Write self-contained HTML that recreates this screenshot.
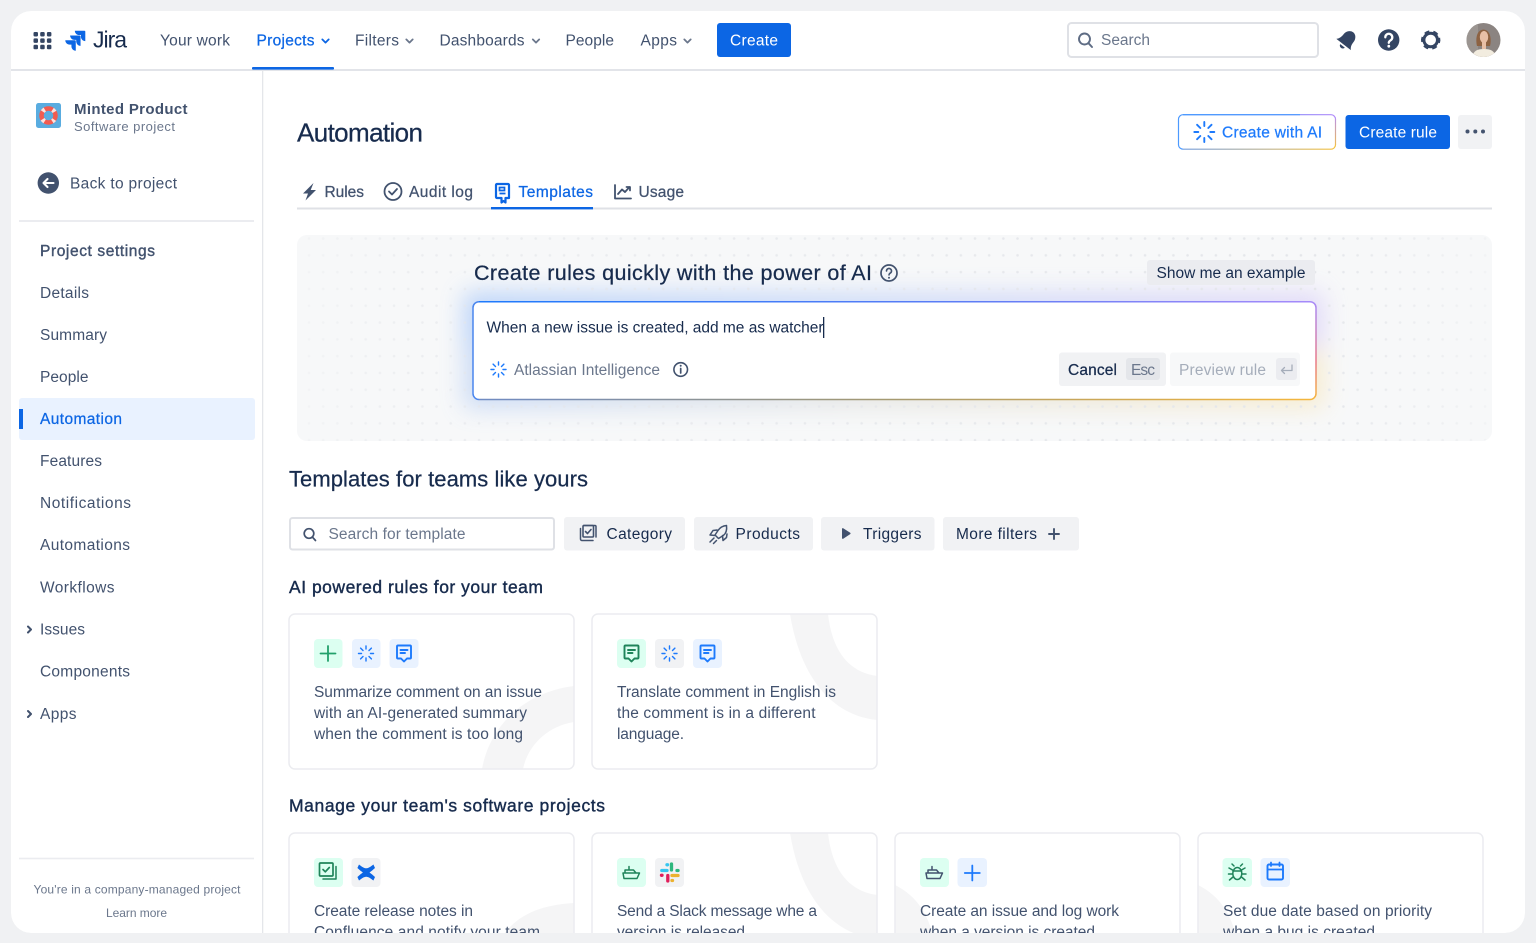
<!DOCTYPE html>
<html lang="en"><head><meta charset="utf-8"><title>Automation - Jira</title>
<style>
html,body{margin:0;padding:0;background:#f0f1f3;width:1536px;height:943px;overflow:hidden}
svg{display:block;filter:blur(.3px)}
text{font-family:"Liberation Sans",sans-serif;font-size:15.5px;fill:#42526e}
.m{stroke:currentColor;stroke-width:.25px;paint-order:stroke}
.s{stroke:currentColor;stroke-width:.4px;paint-order:stroke}
.dk{fill:#172b4d;color:#172b4d}
.sl{fill:#42526e;color:#42526e}
.bl{fill:#0c66e4;color:#0c66e4}
.gr{fill:#6b778c;color:#6b778c}
.nf{fill:none;stroke-linecap:round;stroke-linejoin:round}
</style></head><body>
<svg width="1536" height="943" viewBox="0 0 1536 943" xmlns="http://www.w3.org/2000/svg">
<defs>
<g id="spark" fill="none" stroke="currentColor" stroke-width="1.9" stroke-linecap="round">
<path d="M0-10V-6M0 6V10M-10 0H-6M6 0H10M-7.2-7.2L-4-4M7.2-7.2L4-4M-7.2 7.2L-4 4M7.2 7.2L4 4"/></g>
<g id="cmt" fill="none" stroke="currentColor" stroke-width="1.9" stroke-linejoin="round" stroke-linecap="round">
<path d="M-6-8H6a1 1 0 0 1 1 1V4a1 1 0 0 1-1 1H3L0 8-3 5H-6a1 1 0 0 1-1-1V-7a1 1 0 0 1 1-1z"/><path d="M-3.500-3.500H3.500M-3.500-.5H1"/></g>
<g id="ship" fill="none" stroke="currentColor" stroke-width="1.500" stroke-linejoin="round" stroke-linecap="round">
<path d="M-8 0H8.500L6 5.500H-7L-8 0zM-6 0V-3H2.500L5 0M-2-3V-6.500"/></g>
<g id="chev" fill="none" stroke="currentColor" stroke-width="1.8" stroke-linecap="round" stroke-linejoin="round"><path d="M-3.200-1.600L0 1.600 3.200-1.600"/></g>
<pattern id="dots" x="931" y="237" width="14.17" height="16.8" patternUnits="userSpaceOnUse"><circle cx="1.5" cy="1.5" r="1.3" fill="#e4e6ea"/></pattern>
<linearGradient id="fade" gradientUnits="userSpaceOnUse" x1="297" y1="0" x2="1492" y2="0"><stop offset="0" stop-color="#333"/><stop offset=".1" stop-color="#999"/><stop offset=".85" stop-color="#fff"/><stop offset="1" stop-color="#444"/></linearGradient>
<mask id="dm"><rect x="297" y="235" width="1195" height="206" fill="url(#fade)"/></mask>
<filter id="b" x="-30%" y="-80%" width="160%" height="260%"><feGaussianBlur stdDeviation="12"/></filter>
<linearGradient id="gt" gradientUnits="userSpaceOnUse" x1="473" y1="0" x2="1316" y2="0"><stop offset="0" stop-color="#1d7afc"/><stop offset=".6" stop-color="#5f7df5"/><stop offset="1" stop-color="#a78bfa"/></linearGradient>
<linearGradient id="gr" gradientUnits="userSpaceOnUse" x1="0" y1="301" x2="0" y2="400"><stop offset="0" stop-color="#a78bfa"/><stop offset=".6" stop-color="#e8788a"/><stop offset="1" stop-color="#f5b73d"/></linearGradient>
<linearGradient id="gb" gradientUnits="userSpaceOnUse" x1="473" y1="0" x2="1316" y2="0"><stop offset="0" stop-color="#6f8bc4"/><stop offset=".5" stop-color="#a69a70"/><stop offset="1" stop-color="#f5b73d"/></linearGradient>
<linearGradient id="gw1" gradientUnits="userSpaceOnUse" x1="462" y1="0" x2="1325" y2="0"><stop offset="0" stop-color="#6ea5fa"/><stop offset=".45" stop-color="#9ab8f8"/><stop offset="1" stop-color="#c6b2f8"/></linearGradient>
<linearGradient id="gw2" gradientUnits="userSpaceOnUse" x1="462" y1="0" x2="1325" y2="0"><stop offset="0" stop-color="#8fb4f2"/><stop offset=".45" stop-color="#cfd0cc"/><stop offset="1" stop-color="#f8dc96"/></linearGradient>
<linearGradient id="at" gradientUnits="userSpaceOnUse" x1="1178" y1="0" x2="1336" y2="0"><stop offset="0" stop-color="#1d7afc"/><stop offset="1" stop-color="#b38df9"/></linearGradient>
<linearGradient id="ar" gradientUnits="userSpaceOnUse" x1="0" y1="114" x2="0" y2="150"><stop offset="0" stop-color="#b38df9"/><stop offset="1" stop-color="#f5c13d"/></linearGradient>
<linearGradient id="ab" gradientUnits="userSpaceOnUse" x1="1178" y1="0" x2="1336" y2="0"><stop offset="0" stop-color="#6f9be0"/><stop offset=".6" stop-color="#c2b48a"/><stop offset="1" stop-color="#f5c13d"/></linearGradient>
<clipPath id="c1"><rect x="289" y="614" width="285" height="155" rx="6"/></clipPath>
<clipPath id="c2"><rect x="592" y="614" width="285" height="155" rx="6"/></clipPath>
<clipPath id="c3"><rect x="289" y="833" width="285" height="155" rx="6"/></clipPath>
<clipPath id="c4"><rect x="592" y="833" width="285" height="155" rx="6"/></clipPath>
<clipPath id="c5"><rect x="895" y="833" width="285" height="155" rx="6"/></clipPath>
<clipPath id="c6"><rect x="1198" y="833" width="285" height="155" rx="6"/></clipPath>
<clipPath id="av"><circle cx="1483.500" cy="40" r="17"/></clipPath>
</defs>

<rect width="1536" height="943" fill="#f0f1f3"/>
<rect x="11" y="11" width="1514" height="922" rx="20" fill="#fff"/>

<!-- top nav -->
<rect x="11" y="69" width="1514" height="2" fill="#e2e4e9"/>
<g fill="#344563"><rect x="33.500" y="32" width="4.500" height="4.500" rx="1.200"/><rect x="40.200" y="32" width="4.500" height="4.500" rx="1.200"/><rect x="46.900" y="32" width="4.500" height="4.500" rx="1.200"/><rect x="33.500" y="38.400" width="4.500" height="4.500" rx="1.200"/><rect x="40.200" y="38.400" width="4.500" height="4.500" rx="1.200"/><rect x="46.900" y="38.400" width="4.500" height="4.500" rx="1.200"/><rect x="33.500" y="44.800" width="4.500" height="4.500" rx="1.200"/><rect x="40.200" y="44.800" width="4.500" height="4.500" rx="1.200"/><rect x="46.900" y="44.800" width="4.500" height="4.500" rx="1.200"/></g>
<g transform="translate(63.300 28.700)" fill="#0c66e4"><path d="M11.530 2c0 2.400 1.970 4.350 4.350 4.350h1.780v1.700c0 2.400 1.940 4.340 4.340 4.350V2.840A.84.84 0 0 0 21.160 2H11.530z"/><path d="M6.770 6.800a4.360 4.360 0 0 0 4.340 4.340h1.800v1.720a4.360 4.360 0 0 0 4.340 4.340V7.630a.84.84 0 0 0-.83-.83H6.770z"/><path d="M2 11.600c0 2.400 1.950 4.340 4.350 4.340h1.780v1.720c.01 2.390 1.950 4.330 4.340 4.340v-9.570a.84.84 0 0 0-.84-.84H2z"/></g>
<text x="93" y="47.500" textLength="34" style="font-size:23px;fill:#172b4d">Jira</text>
<text x="160" y="45.300" textLength="70">Your work</text>
<text x="256.500" y="45.300" textLength="58" class="bl m">Projects</text>
<use href="#chev" x="325.500" y="41" color="#0c66e4"/>
<text x="355" y="45.300" textLength="44">Filters</text>
<use href="#chev" x="409.500" y="41" color="#6b778c"/>
<text x="439.500" y="45.300" textLength="85">Dashboards</text>
<use href="#chev" x="536" y="41" color="#6b778c"/>
<text x="565.500" y="45.300" textLength="48.500">People</text>
<text x="640.500" y="45.300" textLength="36.500">Apps</text>
<use href="#chev" x="687.500" y="41" color="#6b778c"/>
<rect x="252" y="67" width="82" height="2.600" rx="1" fill="#0c66e4"/>
<rect x="717" y="23" width="74" height="34" rx="3" fill="#0c66e4"/>
<text x="730" y="45.300" textLength="48" style="fill:#fff">Create</text>

<rect x="1068" y="23" width="250" height="34" rx="3.500" fill="#fff" stroke="#dfe1e6" stroke-width="2"/>
<g class="nf" stroke="#5e6c84" stroke-width="1.900"><circle cx="1084.500" cy="39" r="5.500"/><path d="M1088.500 43.200L1092 47"/></g>
<text x="1101" y="44.800" textLength="49" class="gr">Search</text>

<g transform="translate(1347.500 39.500) rotate(38) scale(1.150)" fill="#344563"><path d="M-8 5.500C-6 3.500-5.500 1.500-5.500-1.500A5.500 6.500 0 0 1 5.500-1.500C5.500 1.500 6 3.500 8 5.500Z"/><path d="M-2.500 7h5a2.500 2.200 0 0 1-5 0z"/></g>
<circle cx="1388.700" cy="40" r="10.700" fill="#344563"/>
<path d="M1385.300 37.300a3.500 3.500 0 1 1 5.300 3c-1.300.8-1.800 1.400-1.800 2.500" fill="none" stroke="#fff" stroke-width="2.300" stroke-linecap="round"/><circle cx="1388.800" cy="46.200" r="1.400" fill="#fff"/>
<circle cx="1430.700" cy="40" r="6.800" fill="none" stroke="#344563" stroke-width="3"/>
<circle cx="1430.700" cy="40" r="8.600" fill="none" stroke="#344563" stroke-width="2.200" stroke-dasharray="5 4" transform="rotate(-14 1430.700 40)"/>

<g clip-path="url(#av)"><rect x="1466" y="23" width="35" height="35" fill="#8b8481"/><rect x="1466" y="23" width="12" height="35" fill="#9b9591"/>
<path d="M1477 46c-1.500-6-1-16 6.500-16.500 7.500.5 8 11 6.500 16.500z" fill="#8d6242"/><ellipse cx="1484" cy="37" rx="4.200" ry="6" fill="#e8bfa6"/><path d="M1472 58c1-7 5-9 12-9s11 2 12 9z" fill="#f2ecdf"/><rect x="1482" y="41.500" width="4" height="7.500" fill="#e8bfa6"/></g>

<!-- sidebar -->
<rect x="262" y="71" width="1.300" height="862" fill="#e4e6ea"/>
<rect x="36" y="103" width="25" height="25" rx="2.500" fill="#59ace0"/>
<circle cx="48.500" cy="115.500" r="7" fill="none" stroke="#f15b50" stroke-width="4.500"/>
<circle cx="48.500" cy="115.500" r="7" fill="none" stroke="#fbe3e0" stroke-width="4.500" stroke-dasharray="3 8" stroke-dashoffset="1.500" transform="rotate(45 48.500 115.500)"/>
<text x="74" y="114" textLength="113.500" class="sl" style="font-weight:700;font-size:15px">Minted Product</text>
<text x="74" y="131" textLength="101" class="gr" style="font-size:13px">Software project</text>
<circle cx="48.300" cy="183" r="10.700" fill="#42526e"/>
<path d="M53.500 183H44M47.500 179L43.500 183l4 4" fill="none" stroke="#fff" stroke-width="2.100" stroke-linecap="round" stroke-linejoin="round"/>
<text x="70" y="188.500" textLength="107">Back to project</text>
<rect x="19" y="220" width="235" height="2" fill="#ebecf0"/>
<text x="40" y="256" textLength="115" class="sl s">Project settings</text>
<text x="40" y="298" textLength="49">Details</text>
<text x="40" y="340" textLength="67">Summary</text>
<text x="40" y="382" textLength="48.500">People</text>
<rect x="19" y="398" width="236" height="42" rx="3" fill="#e9f2ff"/>
<rect x="19" y="409" width="4" height="20" fill="#0c66e4"/>
<text x="40" y="424" textLength="82" class="bl m">Automation</text>
<text x="40" y="466" textLength="62">Features</text>
<text x="40" y="508" textLength="91">Notifications</text>
<text x="40" y="550" textLength="90">Automations</text>
<text x="40" y="592.500" textLength="74.500">Workflows</text>
<text x="40" y="634.500" textLength="45">Issues</text>
<text x="40" y="676.500" textLength="90">Components</text>
<text x="40" y="719" textLength="36.500">Apps</text>
<path d="M28 626.500l3 3-3 3M28 711l3 3-3 3" fill="none" stroke="#42526e" stroke-width="2" stroke-linecap="round" stroke-linejoin="round"/>
<rect x="19" y="857.700" width="235" height="1.600" fill="#ebecf0"/>
<text x="33.500" y="893.500" textLength="207" class="gr" style="font-size:12px">You're in a company-managed project</text>
<text x="106" y="917" textLength="61" class="gr" style="font-size:12px">Learn more</text>

<!-- header -->
<text x="297" y="141.500" textLength="126" class="dk m" style="font-size:26px">Automation</text>
<rect x="1179" y="115" width="156.500" height="34" rx="4" fill="#fff"/>
<path d="M1183 114.700H1331a4.500 4.500 0 0 1 4.500 4.500" fill="none" stroke="url(#at)" stroke-width="1.200"/>
<path d="M1183 114.700H1300" fill="none" stroke="#4c9aff" stroke-width="1.200"/>
<path d="M1335.500 119V145" fill="none" stroke="url(#ar)" stroke-width="1.200"/>
<path d="M1183 149.200H1331a4.500 4.500 0 0 0 4.500-4.500" fill="none" stroke="url(#ab)" stroke-width="1.200"/>
<path d="M1183 114.700a4.500 4.500 0 0 0-4.500 4.500V145a4.500 4.500 0 0 0 4.500 4.200" fill="none" stroke="#4c9aff" stroke-width="1.200"/>
<use href="#spark" x="1204.300" y="132" color="#1d7afc"/>
<text x="1222" y="137.300" textLength="100" style="fill:#1d7afc;color:#1d7afc" class="m">Create with AI</text>
<rect x="1345.500" y="115" width="104.500" height="34" rx="3" fill="#0c66e4"/>
<text x="1359" y="137.300" textLength="78" style="fill:#fff">Create rule</text>
<rect x="1458" y="115" width="34" height="34" rx="3" fill="#f1f2f4"/>
<g fill="#44546f"><circle cx="1467.500" cy="131.500" r="2"/><circle cx="1475.300" cy="131.500" r="2"/><circle cx="1483" cy="131.500" r="2"/></g>

<!-- tabs -->
<rect x="297" y="207.500" width="1195" height="2" fill="#dfe1e6"/>
<rect x="491" y="207" width="102" height="2.400" fill="#0c66e4"/>
<path d="M313.500 183L303 193.500h5L305.500 200.500 316 190h-5.300z" fill="#42526e"/>
<text x="324.500" y="197" textLength="39.500" class="sl m">Rules</text>
<circle cx="393" cy="191.500" r="8.500" fill="none" stroke="#42526e" stroke-width="1.800"/>
<path d="M389 191.500l3 3 5-5.500" class="nf" stroke="#42526e" stroke-width="1.800"/>
<text x="409" y="197" textLength="64" class="sl m">Audit log</text>
<path d="M497 184h11a1 1 0 0 1 1 1v13h-3.500v4.500l-2-1.500-2 1.500V198H497a1 1 0 0 1-1-1v-12a1 1 0 0 1 1-1z" fill="none" stroke="#0c66e4" stroke-width="2.200" stroke-linejoin="round"/>
<path d="M499.500 187.500h5v3h-5zM499.500 193.500h6" fill="none" stroke="#0c66e4" stroke-width="1.700"/>
<text x="518.500" y="197" textLength="74.500" class="bl m">Templates</text>
<path d="M615 185v13.500h16M618 194l4-4.500 3 2.500 4.500-5M626.500 187h3.500v3.500" class="nf" stroke="#42526e" stroke-width="1.800"/>
<text x="638.500" y="197" textLength="45.500" class="sl m">Usage</text>

<!-- AI panel -->
<rect x="297" y="235" width="1195" height="206" rx="10" fill="#f7f8f9"/>
<g filter="url(#b)" opacity=".42">
<rect x="464" y="292" width="860" height="56" fill="url(#gw1)"/>
<rect x="464" y="348" width="860" height="60" fill="url(#gw2)"/>
</g>
<rect x="297" y="235" width="1195" height="206" rx="10" fill="url(#dots)" mask="url(#dm)"/>
<text x="474" y="280" textLength="398" class="dk m" style="font-size:21.500px">Create rules quickly with the power of AI</text>
<circle cx="889" cy="273" r="8" fill="none" stroke="#42526e" stroke-width="1.700"/>
<path d="M886.500 271a2.500 2.500 0 1 1 3.800 2.100c-.9.600-1.300 1-1.300 1.800" fill="none" stroke="#42526e" stroke-width="1.600" stroke-linecap="round"/><circle cx="889" cy="277.700" r="1" fill="#42526e"/>
<rect x="1147" y="260" width="168" height="25" rx="3" fill="#ebecf0"/>
<text x="1156.500" y="278" textLength="149" class="dk">Show me an example</text>

<rect x="473" y="301.500" width="843" height="98" rx="6" fill="#fff"/>
<path d="M479 301.700H1310" fill="none" stroke="url(#gt)" stroke-width="1.500"/>
<path d="M1310 301.700a6 6 0 0 1 6 6V393.500a6 6 0 0 1-6 6" fill="none" stroke="url(#gr)" stroke-width="1.500"/>
<path d="M479 399.500H1310" fill="none" stroke="url(#gb)" stroke-width="1.500"/>
<path d="M479 301.700a6 6 0 0 0-6 6V393.500a6 6 0 0 0 6 6" fill="none" stroke="#4a86ee" stroke-width="1.500"/>
<text x="486.500" y="332.500" textLength="337" class="dk">When a new issue is created, add me as watcher</text>
<rect x="823" y="317" width="1.300" height="21" fill="#172b4d"/>
<use href="#spark" transform="translate(498.500 369.500) scale(.75)" color="#1d7afc"/>
<text x="514" y="375" textLength="146" class="gr">Atlassian Intelligence</text>
<circle cx="680.700" cy="369.500" r="6.800" fill="none" stroke="#42526e" stroke-width="1.600"/>
<path d="M680.700 368.500v4.500" stroke="#42526e" stroke-width="1.700" stroke-linecap="round"/><circle cx="680.700" cy="365.800" r="1" fill="#42526e"/>
<rect x="1059" y="352.500" width="107" height="33.500" rx="3" fill="#f1f2f4"/>
<text x="1068" y="375" textLength="49" class="dk m">Cancel</text>
<rect x="1126" y="358" width="34" height="22" rx="3" fill="#e4e6ea"/>
<text x="1131" y="375" textLength="24" class="gr">Esc</text>
<rect x="1170" y="352.500" width="130" height="33.500" rx="3" fill="#f7f8f9"/>
<text x="1179" y="375" textLength="87" style="fill:#a5adba">Preview rule</text>
<rect x="1276" y="358" width="21" height="22" rx="3" fill="#ebecf0"/>
<path d="M1292 365v5.500h-10.500M1284.500 367.500l-3 3 3 3" class="nf" stroke="#a5adba" stroke-width="1.300"/>

<!-- templates -->
<text x="289" y="486.300" textLength="299" class="dk m" style="font-size:22px">Templates for teams like yours</text>
<rect x="290" y="518" width="264" height="31.500" rx="2.500" fill="#fff" stroke="#dfe1e6" stroke-width="2"/>
<g class="nf" stroke="#42526e" stroke-width="1.700"><circle cx="309" cy="533.500" r="4.800"/><path d="M312.500 537.200L315.500 540.500"/></g>
<text x="328.500" y="539" textLength="137" class="gr">Search for template</text>

<rect x="564" y="517" width="121" height="33.500" rx="3" fill="#f1f2f4"/>
<path d="M583.500 525.500h11.500a1 1 0 0 1 1 1v10.500M580.500 528.500V539a1.500 1.500 0 0 0 1.500 1.500h11" class="nf" stroke="#42526e" stroke-width="1.500"/>
<rect x="583" y="525.500" width="10.500" height="11.500" rx="1" fill="none" stroke="#42526e" stroke-width="1.600"/>
<path d="M585.500 531.500l2 2 3.500-4" class="nf" stroke="#42526e" stroke-width="1.600"/>
<text x="606.500" y="539" textLength="65.500" class="dk">Category</text>

<rect x="694" y="517" width="119" height="33.500" rx="3" fill="#f1f2f4"/>
<path d="M726.500 525.500c-4 .4-6.500 2-8.500 5l-3 4.500 3.500 3.500 4.800-3c2.700-2 3.800-5.300 3.200-10zM715 535.500l-5-.5 3-4.500 4-.5M722.500 535.500l.5 5 3.500-3 .5-3.500M714 538l-4 4M716.500 540.500l-3 3" class="nf" stroke="#42526e" stroke-width="1.500"/>
<text x="735.500" y="539" textLength="64.500" class="dk">Products</text>

<rect x="821" y="517" width="113.500" height="33.500" rx="3" fill="#f1f2f4"/>
<path d="M842 529.200a.8.800 0 0 1 1.200-.7l7 4.600a.8.800 0 0 1 0 1.300l-7 4.600a.8.800 0 0 1-1.200-.7z" fill="#42526e" transform="translate(0 -.3)"/>
<text x="863" y="539" textLength="58.500" class="dk">Triggers</text>

<rect x="943" y="517" width="136" height="33.500" rx="3" fill="#f1f2f4"/>
<text x="956" y="539" textLength="81" class="dk">More filters</text>
<path d="M1054 529v10M1049 534h10" stroke="#42526e" stroke-width="1.900" stroke-linecap="round"/>

<text x="289" y="592.800" textLength="254" class="dk s" style="font-size:17.500px">AI powered rules for your team</text>

<!-- row 1 cards -->
<g clip-path="url(#c1)"><rect x="289" y="614" width="285" height="155" fill="#fff"/><path d="M482 769C490 725 525 692 574 686V722C548 726 528 745 523 769Z" fill="#f5f5f6"/></g>
<rect x="289" y="614" width="285" height="155" rx="6" fill="none" stroke="#ebecf0" stroke-width="1.500"/>
<g clip-path="url(#c2)"><rect x="592" y="614" width="285" height="155" fill="#fff"/><path d="M790 614C800 675 830 715 877 720V676C848 672 832 650 828 614Z" fill="#f5f5f6"/></g>
<rect x="592" y="614" width="285" height="155" rx="6" fill="none" stroke="#ebecf0" stroke-width="1.500"/>

<rect x="314" y="639" width="28.500" height="29" rx="4" fill="#dcfff1"/>
<path d="M328 646v15M320.500 653.500h15" stroke="#22a06b" stroke-width="1.800" stroke-linecap="round"/>
<rect x="352" y="639" width="28.500" height="29" rx="4" fill="#e9f2ff"/>
<use href="#spark" transform="translate(366 653.500) scale(.75)" color="#1d7afc"/>
<rect x="389.500" y="639" width="29" height="29" rx="4" fill="#e9f2ff"/>
<use href="#cmt" x="404" y="653.500" color="#1d7afc"/>
<text x="314" y="697" textLength="228">Summarize comment on an issue</text>
<text x="314" y="718" textLength="213">with an AI-generated summary</text>
<text x="314" y="739" textLength="209">when the comment is too long</text>

<rect x="617" y="639" width="29" height="29" rx="4" fill="#dcfff1"/>
<use href="#cmt" x="631.500" y="653.500" color="#1f845a"/>
<rect x="655" y="639" width="29" height="29" rx="4" fill="#f1f2f4"/>
<use href="#spark" transform="translate(669.500 653.500) scale(.75)" color="#1d7afc"/>
<rect x="693" y="639" width="29" height="29" rx="4" fill="#e9f2ff"/>
<use href="#cmt" x="707.500" y="653.500" color="#1d7afc"/>
<text x="617" y="697" textLength="219">Translate comment in English is</text>
<text x="617" y="718" textLength="198.500">the comment is in a different</text>
<text x="617" y="739" textLength="67">language.</text>

<!-- row 2 -->
<text x="289" y="811.500" textLength="316" class="dk s" style="font-size:17.500px">Manage your team's software projects</text>
<g clip-path="url(#c3)"><rect x="289" y="833" width="285" height="155" fill="#fff"/><path d="M500 940C515 915 540 905 574 903V945Z" fill="#f5f5f6"/></g>
<rect x="289" y="833" width="285" height="155" rx="6" fill="none" stroke="#ebecf0" stroke-width="1.500"/>
<g clip-path="url(#c4)"><rect x="592" y="833" width="285" height="155" fill="#fff"/><path d="M790 833C800 894 830 934 877 939V895C848 891 832 869 828 833Z" fill="#f5f5f6"/></g>
<rect x="592" y="833" width="285" height="155" rx="6" fill="none" stroke="#ebecf0" stroke-width="1.500"/>
<g clip-path="url(#c5)"><rect x="895" y="833" width="285" height="155" fill="#fff"/><path d="M895 885C915 895 928 912 934 940H895Z" fill="#f5f5f6"/></g>
<rect x="895" y="833" width="285" height="155" rx="6" fill="none" stroke="#ebecf0" stroke-width="1.500"/>
<g clip-path="url(#c6)"><rect x="1198" y="833" width="285" height="155" fill="#fff"/><path d="M1198 885C1218 895 1231 912 1237 940H1198Z" fill="#f5f5f6"/></g>
<rect x="1198" y="833" width="285" height="155" rx="6" fill="none" stroke="#ebecf0" stroke-width="1.500"/>

<rect x="314" y="858" width="29" height="29" rx="4" fill="#dcfff1"/>
<rect x="319.500" y="863" width="13.500" height="13" rx="1" fill="none" stroke="#1f845a" stroke-width="1.700"/>
<path d="M323 869.500l2.300 2.300 4-4.300" class="nf" stroke="#1f845a" stroke-width="1.700"/>
<path d="M336 866.500v12.500h-13" class="nf" stroke="#1f845a" stroke-width="1.500"/>
<rect x="351.500" y="858" width="29" height="29" rx="4" fill="#f1f2f4"/>
<path d="M359 864.500c2.500 2 5 3.800 7.200 3.800s4.700-1.800 7.200-3.800l1.600 3.500c-2 1.800-3.700 3.300-5.500 4.500 1.800 1.200 3.500 2.700 5.500 4.500l-1.600 3.500c-2.500-2-5-3.800-7.200-3.800s-4.700 1.800-7.200 3.800l-1.600-3.500c2-1.800 3.700-3.300 5.500-4.500-1.800-1.200-3.500-2.700-5.500-4.500z" fill="#0c66e4"/>
<text x="314" y="916" textLength="159">Create release notes in</text>
<text x="314" y="937" textLength="226">Confluence and notify your team</text>

<rect x="617" y="858" width="29" height="29" rx="4" fill="#dcfff1"/>
<use href="#ship" x="631" y="873" color="#1f845a"/>
<rect x="655" y="858" width="29" height="29" rx="4" fill="#f1f2f4"/>
<g stroke-width="3.300" stroke-linecap="round" fill="none"><path d="M661.800 870.500h5.200" stroke="#36c5f0"/><path d="M671.500 864v6" stroke="#2eb67d"/><path d="M677 870.500h1" stroke="#2eb67d"/><path d="M667.800 875.500v5.500" stroke="#e01e5a"/><path d="M661.500 875.300h.5" stroke="#e01e5a"/><path d="M672 875.500h6" stroke="#ecb22e"/><path d="M672 880.500h.5" stroke="#ecb22e"/><path d="M667 864.800h.5" stroke="#36c5f0"/></g>
<text x="617" y="916" textLength="200">Send a Slack message whe a</text>
<text x="617" y="937" textLength="128">version is released</text>

<rect x="920" y="858" width="29" height="29" rx="4" fill="#dcfff1"/>
<use href="#ship" x="934" y="873" color="#42526e"/>
<rect x="957.500" y="858" width="29.500" height="29" rx="4" fill="#e9f2ff"/>
<path d="M972.300 865.500v15M964.800 873h15" stroke="#1d7afc" stroke-width="1.800" stroke-linecap="round"/>
<text x="920" y="916" textLength="199">Create an issue and log work</text>
<text x="920" y="937" textLength="175">when a version is created</text>

<rect x="1222.500" y="858" width="29.500" height="29" rx="4" fill="#dcfff1"/>
<g class="nf" stroke="#1f845a" stroke-width="1.500"><ellipse cx="1237.300" cy="873.500" rx="4.500" ry="6"/><path d="M1233 871h8.500M1234 866l-2-2M1240.500 866l2-2M1232.500 870l-3.500-2M1232.500 874h-4M1233 877l-3.500 3M1241.500 870l3.500-2M1242 874h4M1241.500 877l3.500 3"/></g>
<rect x="1260.500" y="858" width="29.500" height="29" rx="4" fill="#e9f2ff"/>
<rect x="1267.500" y="864.500" width="15.500" height="15" rx="1.500" fill="none" stroke="#1d7afc" stroke-width="1.900"/>
<path d="M1267.500 869.500h15.500M1271 862.500v3.500M1279.500 862.500v3.500" stroke="#1d7afc" stroke-width="1.800" stroke-linecap="round"/>
<text x="1223" y="916" textLength="209">Set due date based on priority</text>
<text x="1223" y="937" textLength="152">when a bug is created</text>

<!-- outer frame on top -->
<path fill-rule="evenodd" fill="#f0f1f3" d="M0 0H1536V943H0ZM31 11A20 20 0 0 0 11 31V913A20 20 0 0 0 31 933H1505A20 20 0 0 0 1525 913V31A20 20 0 0 0 1505 11Z"/>
</svg>
</body></html>
